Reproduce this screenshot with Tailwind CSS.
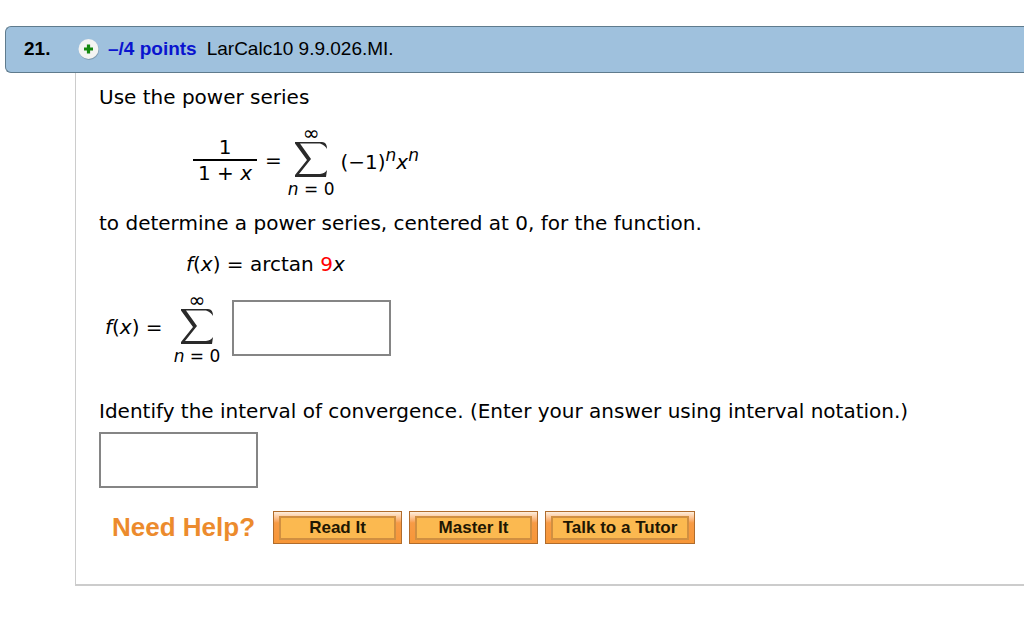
<!DOCTYPE html>
<html lang="en">

<head>
    <meta charset="UTF-8">
    <meta name="viewport" content="width=device-width, initial-scale=1.0">
    <title>LarCalc10 9.9.026.MI.</title>
    <script src="https://cdn.jsdelivr.net/npm/@tailwindcss/browser@4"></script>
</head>

<body class="bg-white text-black font-['DejaVu_Sans',Verdana,sans-serif] text-[20px] leading-6">
    <main class="pt-[26px] pl-[5px]">
        <!-- Question header -->
        <header class="flex items-center h-[47px] pl-[18px] pb-[2px] bg-[#9fc1dd] border border-r-0 border-[#5f7b8d] rounded-l-md font-['Liberation_Sans',Arial,sans-serif] text-[19px]">
            <h2 class="w-[53px] font-bold">21.</h2>
            <button type="button" aria-label="Expand" class="mr-[9px]">
                <svg class="block" width="22" height="22" viewBox="0 0 22 22">
                    <circle cx="12" cy="12" r="10" fill="#7f9bb1" />
                    <circle cx="11.500" cy="11" r="10" fill="#f4f4f2" />
                    <path d="M11.500 6.500v9M7 11h9" stroke="#15880f" stroke-width="3.200" />
                </svg>
            </button>
            <a href="#" class="mr-[10px] font-bold text-[#0a14cf]">–/4 points</a>
            <span>LarCalc10 9.9.026.MI.</span>
        </header>

        <section class="ml-[70px] pl-[23px] pt-3 pb-10 border-l border-b-2 border-[#cccccc]">
            <p>Use the power series</p>

            <!-- Given series -->
            <div class="flex items-center pl-[94px] mt-4">
                <div class="pb-1 text-center">
                    <div class="border-b-2 border-black">1</div>
                    <div class="px-[5px]">1 + <i>x</i></div>
                </div>
                <span class="ml-2 pb-1">=</span>
                <div class="ml-[6px] flex flex-col items-center text-[17px] leading-5">
                    <span class="text-[20px] leading-4">∞</span>
                    <svg width="34" height="38" viewBox="0 0 34 38">
                        <path d="M1 1H28Q33 1 33 8Q31 4 26 2.500H6L17 18L5 33H26Q31 32.500 33 29L32 36H1V34L13 19L1 2.500Z" fill="#2a2a2a" />
                    </svg>
                    <span><i>n</i> = 0</span>
                </div>
                <span class="ml-[6px]">(−1)<sup class="text-[17px]"><i>n</i></sup><i>x</i><sup class="text-[17px]"><i>n</i></sup></span>
            </div>

            <p class="mt-3">to determine a power series, centered at 0, for the function.</p>
            <p class="mt-[17px] pl-[87px]"><i>f</i>(<i>x</i>) = arctan <span class="text-[#ff0000]">9</span><i>x</i></p>

            <!-- Answer series -->
            <div class="flex items-center mt-4 pl-[6px]">
                <label for="series" class="pb-1"><i>f</i>(<i>x</i>) =</label>
                <div class="ml-[11px] flex flex-col items-center text-[17px] leading-5">
                    <span class="text-[20px] leading-4">∞</span>
                    <svg width="34" height="38" viewBox="0 0 34 38">
                        <path d="M1 1H28Q33 1 33 8Q31 4 26 2.500H6L17 18L5 33H26Q31 32.500 33 29L32 36H1V34L13 19L1 2.500Z" fill="#2a2a2a" />
                    </svg>
                    <span><i>n</i> = 0</span>
                </div>
                <input id="series" type="text" class="ml-3 mb-[3px] w-[159px] h-14 px-2 border-2 border-[#858585]">
            </div>

            <label for="interval" class="block mt-[33px]">Identify the interval of convergence. (Enter your answer using interval notation.)</label>
            <input id="interval" type="text" class="block mt-[9px] w-[159px] h-14 px-2 border-2 border-[#858585]">

            <!-- Help links -->
            <div class="flex items-center mt-[23px] pl-[13px] font-['Liberation_Sans',Arial,sans-serif] font-bold">
                <span class="mr-[18px] pb-[2px] text-[26px] text-[#ec8b2d]">Need Help?</span>
                <div class="flex gap-[7px] text-[17px] leading-5 text-[#1f1703]">
                    <button type="button" class="w-[129px] h-[33px] px-[5px] py-1 border border-[#b06c2c] bg-linear-to-b from-[#fdeedd] via-[#f79b45] via-35% to-[#f79637]"><span class="block border-2 border-[#d08f41] bg-[#fbb950]">Read It</span></button>
                    <button type="button" class="w-[129px] h-[33px] px-[5px] py-1 border border-[#b06c2c] bg-linear-to-b from-[#fdeedd] via-[#f79b45] via-35% to-[#f79637]"><span class="block border-2 border-[#d08f41] bg-[#fbb950]">Master It</span></button>
                    <button type="button" class="w-[150px] h-[33px] px-[5px] py-1 border border-[#b06c2c] bg-linear-to-b from-[#fdeedd] via-[#f79b45] via-35% to-[#f79637]"><span class="block border-2 border-[#d08f41] bg-[#fbb950]">Talk to a Tutor</span></button>
                </div>
            </div>
        </section>
    </main>
</body>

</html>
